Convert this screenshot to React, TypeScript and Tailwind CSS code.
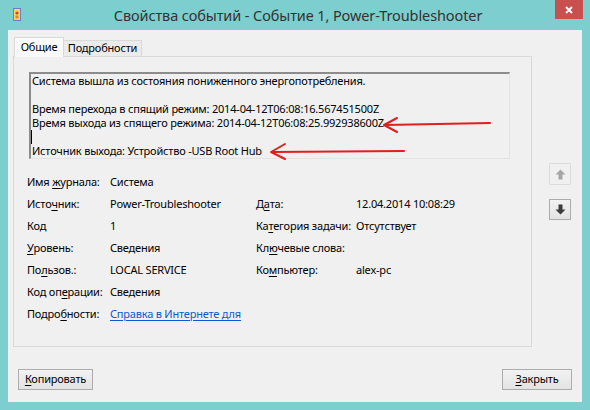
import React from "react";

const U = ({ children }: { children: React.ReactNode }) => (
  <span className="underline underline-offset-[2px] decoration-[1px]">{children}</span>
);

const BlockArrow = ({ down, color }: { down?: boolean; color: string }) => (
  <svg width="11" height="11" viewBox="0 0 11 11" className={down ? "rotate-180" : ""}>
    <path d="M5.5 0.5 L10.5 5.5 H7.5 V10.5 H3.5 V5.5 H0.5 Z" fill={color} />
  </svg>
);

const App = () => {
  return (
    <div
      className="relative flex h-[410px] w-[590px] flex-col overflow-hidden bg-[#7ccfce] text-[11px] tracking-[-0.2px] text-black"
      style={{ fontFamily: '"Segoe UI", "Noto Sans", sans-serif' }}
    >
      {/* title bar */}
      <div className="flex h-[30px] shrink-0 items-start">
        <div className="ml-[13px] mt-[8px]">
          <svg width="8" height="13" viewBox="0 0 8 13">
            <rect x="0.5" y="0.5" width="7" height="12" fill="#f4d46a" stroke="#6e7fc2" />
            <circle cx="4" cy="5" r="1.6" fill="#d2462f" />
            <rect x="2.5" y="7.5" width="3" height="3" fill="#e08a2c" />
          </svg>
        </div>
        <div className="flex-1 pl-[20px] pt-[5px] text-center text-[14.5px] tracking-[-0.1px] text-[#333]">
          Свойства событий - Событие 1, Power-Troubleshooter
        </div>
        <button className="mr-[7px] flex h-[19px] w-[28px] items-center justify-center bg-[#c8504e]">
          <svg width="8" height="8" viewBox="0 0 8 8">
            <path d="M1 1 L7 7 M7 1 L1 7" stroke="#fff" strokeWidth="1.8" />
          </svg>
        </button>
      </div>

      {/* client area */}
      <div className="mx-[8px] mb-[8px] flex flex-1 flex-col bg-[#f0f0f0]">
        <div className="flex">
          <div className="ml-[5px] flex w-[519px] flex-col pt-[7px]">
            <div className="flex h-[19px] items-start pl-[1px]">
              <div className="relative z-10 flex h-[20px] w-[50px] items-center justify-center border border-b-0 border-[#d9d9d9] bg-[#fafafa] pb-[1px]">
                Общие
              </div>
              <div className="mt-[3px] flex h-[16px] w-[78px] items-center justify-center border border-b-0 border-l-0 border-[#d9d9d9] bg-[#ebebeb]">
                Подробности
              </div>
            </div>
            <div className="h-[291px] border border-[#d9d9d9] bg-[#f0f0f0] pl-[13px] pt-[15px]">
              <div className="ml-[2px] h-[87px] w-[481px] border-l-2 border-t-2 border-r border-b border-l-[#8c8c8c] border-t-[#8c8c8c] border-r-[#e3e3e3] border-b-[#e3e3e3] pl-[1px] leading-[14px]">
                <div>Система вышла из состояния пониженного энергопотребления.</div>
                <div className="h-[14px]" />
                <div>Время перехода в спящий режим: 2014-04-12T06:08:16.567451500Z</div>
                <div>Время выхода из спящего режима: 2014-04-12T06:08:25.992938600Z</div>
                <div className="-ml-[1px] h-[14px]">
                  <div className="h-[14px] w-px bg-black" />
                </div>
                <div>Источник выхода: Устройство -USB Root Hub</div>
              </div>

              <div className="-ml-[0px] mt-[12px] grid grid-cols-[83px_146px_100px_1fr] auto-rows-[22px] items-center whitespace-nowrap">
                <div>
                  Имя <U>ж</U>урнала:
                </div>
                <div>Система</div>
                <div />
                <div />

                <div>
                  Исто<U>ч</U>ник:
                </div>
                <div>Power-Troubleshooter</div>
                <div>
                  Д<U>а</U>та:
                </div>
                <div>12.04.2014 10:08:29</div>

                <div>Код</div>
                <div>1</div>
                <div>
                  Ка<U>т</U>егория задачи:
                </div>
                <div>Отсутствует</div>

                <div>
                  <U>У</U>ровень:
                </div>
                <div>Сведения</div>
                <div>
                  Кл<U>ю</U>чевые слова:
                </div>
                <div />

                <div>
                  По<U>л</U>ьзов.:
                </div>
                <div>LOCAL SERVICE</div>
                <div>
                  Ко<U>м</U>пьютер:
                </div>
                <div>alex-pc</div>

                <div>
                  Код оп<U>е</U>рации:
                </div>
                <div>Сведения</div>
                <div />
                <div />

                <div>
                  Подро<U>б</U>ности:
                </div>
                <div className="col-span-2">
                  <a className="text-[#0a5bd0] underline underline-offset-[2px]">Справка в Интернете для </a>
                </div>
                <div />
              </div>
            </div>
          </div>

          <div className="ml-[17px] flex flex-col gap-[14px] pt-[133px]">
            <button className="flex h-[22px] w-[22px] items-center justify-center border border-[#dcdcdc] bg-[#f0f0f0]">
              <BlockArrow color="#a6a6a6" />
            </button>
            <button className="flex h-[21px] w-[22px] items-center justify-center border border-[#acacac] bg-gradient-to-b from-[#f2f2f2] to-[#e3e3e3]">
              <BlockArrow down color="#3c3c3c" />
            </button>
          </div>
        </div>

        <div className="mt-[22px] flex justify-between px-[10px]">
          <button className="h-[21px] w-[75px] border border-[#acacac] bg-gradient-to-b from-[#f2f2f2] to-[#e3e3e3]">
            <U>К</U>опировать
          </button>
          <button className="h-[21px] w-[70px] border border-[#acacac] bg-gradient-to-b from-[#f2f2f2] to-[#e3e3e3]">
            <U>З</U>акрыть
          </button>
        </div>
      </div>

      {/* red annotation arrows */}
      <svg className="pointer-events-none absolute inset-0" width="590" height="410">
        <g stroke="#e0201e" strokeWidth="2" fill="none" strokeLinecap="round" strokeLinejoin="round">
          <path d="M490 123 L385 125" />
          <path d="M397 118 L384 125 L397 132" />
          <path d="M404 151 L272 152" />
          <path d="M285 144 L271 152 L285 159" />
        </g>
      </svg>
    </div>
  );
};

export default App;
